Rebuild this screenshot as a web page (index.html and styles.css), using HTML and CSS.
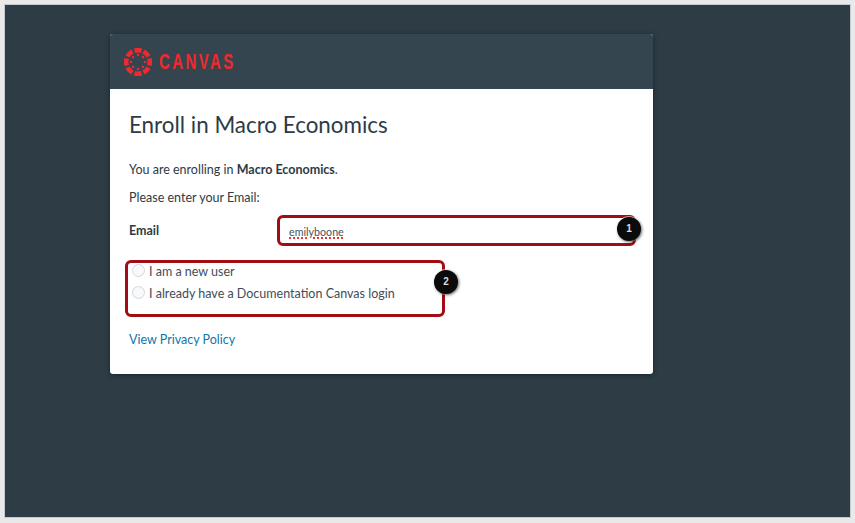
FILE: index.html
```html
<!DOCTYPE html>
<html lang="en">
<head>
<meta charset="UTF-8">
<meta name="viewport" content="width=device-width, initial-scale=1.0">
<title>Enroll in Macro Economics</title>
<link rel="stylesheet" href="styles.css">
</head>
<body>
<div class="window">
    <div class="card">
        <div class="card-header">
            <svg class="logo" width="28" height="28" viewBox="-14 -14 28 28">
                <defs>
                    <path id="petal" d="M-4.1 -13.6 Q0 -14.6 4.1 -13.6 L2.9 -9.1 Q0 -9.9 -2.9 -9.1 Z"/>
                    <circle id="dot" cx="0" cy="-7" r="1.25"/>
                </defs>
                <g fill="#ee2a2e">
                    <use href="#petal"/>
                    <use href="#petal" transform="rotate(45)"/>
                    <use href="#petal" transform="rotate(90)"/>
                    <use href="#petal" transform="rotate(135)"/>
                    <use href="#petal" transform="rotate(180)"/>
                    <use href="#petal" transform="rotate(225)"/>
                    <use href="#petal" transform="rotate(270)"/>
                    <use href="#petal" transform="rotate(315)"/>
                    <use href="#dot"/>
                    <use href="#dot" transform="rotate(45)"/>
                    <use href="#dot" transform="rotate(90)"/>
                    <use href="#dot" transform="rotate(135)"/>
                    <use href="#dot" transform="rotate(180)"/>
                    <use href="#dot" transform="rotate(225)"/>
                    <use href="#dot" transform="rotate(270)"/>
                    <use href="#dot" transform="rotate(315)"/>
                </g>
            </svg>
            <span class="wordmark">CANVAS</span>
        </div>
        <div class="card-body">
            <h1>Enroll in Macro Economics</h1>
            <p class="intro">You are enrolling in <strong>Macro Economics</strong>.</p>
            <p class="prompt">Please enter your Email:</p>
            <div class="email-row">
                <label class="email-label">Email</label>
                <div class="email-input"><span class="typed">emilyboone</span></div>
            </div>
            <div class="radio-row"><span class="radio"></span>I am a new user</div>
            <div class="radio-row"><span class="radio"></span>I already have a Documentation Canvas login</div>
            <a class="privacy" href="#">View Privacy Policy</a>
        </div>
        <!-- screenshot annotations -->
        <div class="callout callout-email"></div>
        <div class="callout callout-radios"></div>
        <div class="badge badge-one">1</div>
        <div class="badge badge-two">2</div>
    </div>
</div>
</body>
</html>
```

FILE: styles.css
```css
/* Basic styling */
body {
    font-family: Lato, "Open Sans", sans-serif;
    margin: 0;
    padding: 0;
    width: 855px;
    height: 523px;
    overflow: hidden;
    background-color: #e9e9e9;
}
.window {
    margin: 5px 5px 0 5px;
    height: 512px;
    padding-top: 29px;
    box-sizing: border-box;
    background-color: #2d3c45;
    box-shadow: 0 0 0 1px #c6cacd;
}
.card {
    position: relative;
    width: 543px;
    height: 340px;
    margin-left: 105px;
    background-color: #fff;
    border-radius: 3px;
    box-shadow: 0 1px 5px rgba(0, 0, 0, 0.4);
    color: #2d3b45;
}
.card-header {
    display: flex;
    align-items: center;
    height: 55px;
    padding-left: 14px;
    box-sizing: border-box;
    background-color: #35454f;
    border-radius: 3px 3px 0 0;
}
.wordmark {
    margin-left: 7px;
    width: 74px;
    font-family: "Liberation Sans", sans-serif;
    font-size: 22px;
    font-weight: 700;
    letter-spacing: 3.6px;
    color: #ee2a2e;
    transform: scaleX(0.68);
    transform-origin: left center;
    white-space: nowrap;
}
.card-body {
    padding: 21px 19px 0 19px;
}
h1 {
    margin: 0 0 21px 0;
    font-size: 22.4px;
    line-height: 29px;
    font-weight: 400;
}
p {
    margin: 0;
    font-size: 12.5px;
    line-height: 20px;
}
.intro {
    margin-bottom: 8px;
}
.prompt {
    margin-bottom: 7px;
}
.email-row {
    display: flex;
    align-items: center;
    height: 30px;
    margin-bottom: 15px;
}
.email-label {
    width: 150px;
    font-size: 12.5px;
    font-weight: 700;
}
.email-input {
    flex: 1;
    height: 30px;
    padding-left: 10px;
    box-sizing: border-box;
    font-size: 10.7px;
    line-height: 33px;
    color: #45525c;
}
.typed {
    text-decoration: underline dotted #e8353a 2px;
    text-underline-offset: 1px;
}
.radio-row {
    display: flex;
    align-items: center;
    height: 22px;
    font-size: 12.5px;
    color: #3f4d57;
}
.radio {
    width: 13px;
    height: 13px;
    margin: -2px 4px 0 3px;
    border: 1px solid #d3d8dc;
    border-radius: 50%;
    box-sizing: border-box;
    background-color: #f8f9fa;
}
.privacy {
    display: block;
    margin-top: 26px;
    font-size: 12.5px;
    line-height: 20px;
    color: #0f75ac;
    text-decoration: none;
}
.callout {
    position: absolute;
    border: 3px solid #a10d12;
    border-radius: 6px;
    box-sizing: border-box;
}
.callout-email {
    left: 167px;
    top: 181px;
    width: 359px;
    height: 31px;
}
.callout-radios {
    left: 15px;
    top: 226px;
    width: 320px;
    height: 57px;
}
.badge {
    position: absolute;
    width: 24px;
    height: 24px;
    border-radius: 50%;
    background-color: #0b0b0b;
    box-shadow: 1px 1px 3px rgba(0, 0, 0, 0.6), 0 0 0 1px rgba(255, 255, 255, 0.6);
    color: #ddd;
    font-family: "Liberation Sans", sans-serif;
    font-size: 10px;
    font-weight: 700;
    line-height: 24px;
    text-align: center;
}
.badge-one {
    left: 507px;
    top: 183px;
}
.badge-two {
    left: 324px;
    top: 236px;
}
```
